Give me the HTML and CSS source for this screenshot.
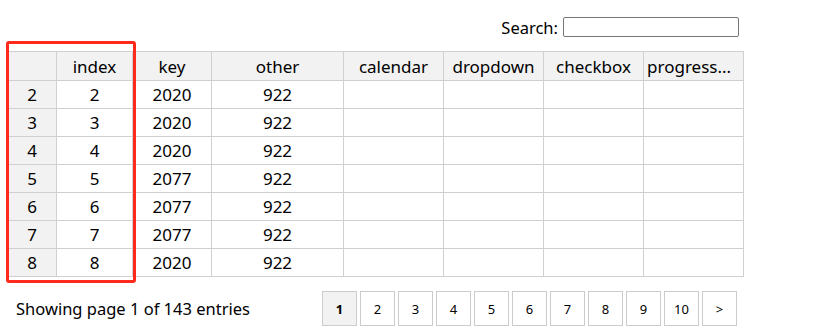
FILE: index.html
```html
<!DOCTYPE html>
<html>
<head>
  <title>Table</title>
  <link rel="stylesheet" href="styles.css">
</head>
<body>
  <div class="container">
    <div class="search-bar">
      <label for="search">Search:</label>
      <input type="text" id="search">
    </div>

    <div class="table-wrap">
      <table class="grid">
        <colgroup>
          <col style="width: 49px">
          <col style="width: 76px">
          <col style="width: 79px">
          <col style="width: 132px">
          <col style="width: 100px">
          <col style="width: 100px">
          <col style="width: 100px">
          <col style="width: 100px">
        </colgroup>
        <thead>
          <tr>
            <th class="row-head"></th>
            <th>index</th>
            <th>key</th>
            <th>other</th>
            <th>calendar</th>
            <th>dropdown</th>
            <th>checkbox</th>
            <th class="clip">progress...</th>
          </tr>
        </thead>
        <tbody>
          <tr><td class="row-head">2</td><td>2</td><td>2020</td><td>922</td><td></td><td></td><td></td><td></td></tr>
          <tr><td class="row-head">3</td><td>3</td><td>2020</td><td>922</td><td></td><td></td><td></td><td></td></tr>
          <tr><td class="row-head">4</td><td>4</td><td>2020</td><td>922</td><td></td><td></td><td></td><td></td></tr>
          <tr><td class="row-head">5</td><td>5</td><td>2077</td><td>922</td><td></td><td></td><td></td><td></td></tr>
          <tr><td class="row-head">6</td><td>6</td><td>2077</td><td>922</td><td></td><td></td><td></td><td></td></tr>
          <tr><td class="row-head">7</td><td>7</td><td>2077</td><td>922</td><td></td><td></td><td></td><td></td></tr>
          <tr><td class="row-head">8</td><td>8</td><td>2020</td><td>922</td><td></td><td></td><td></td><td></td></tr>
        </tbody>
      </table>
      <div class="highlight"></div>
    </div>

    <div class="footer">
      <span class="info">Showing page 1 of 143 entries</span>
      <div class="pager">
        <button class="active">1</button>
        <button>2</button>
        <button>3</button>
        <button>4</button>
        <button>5</button>
        <button>6</button>
        <button>7</button>
        <button>8</button>
        <button>9</button>
        <button>10</button>
        <button>&gt;</button>
      </div>
    </div>
  </div>
</body>
</html>
```

FILE: styles.css
```css
body {
  margin: 0;
  background: #fff;
  color: #000;
  font-family: "Noto Sans", "Open Sans", sans-serif;
}

.container {
  width: 737px;
  padding-left: 7px;
}

.search-bar {
  display: flex;
  justify-content: flex-end;
  align-items: center;
  height: 20px;
  padding-top: 17px;
  padding-right: 5px;
  font-size: 16.5px;
}

.search-bar label {
  margin-right: 5px;
}

.search-bar input {
  width: 176px;
  height: 20px;
  box-sizing: border-box;
  border: 1px solid #767676;
  border-radius: 2px;
  padding: 0 3px;
  font-size: 13px;
}

.table-wrap {
  position: relative;
  margin-top: 14px;
}

.grid {
  border-collapse: collapse;
  table-layout: fixed;
  width: 737px;
  font-size: 17px;
}

.grid th,
.grid td {
  border: 1px solid #d0d0d0;
  height: 27px;
  padding: 0 3px;
  text-align: center;
  white-space: nowrap;
  font-weight: normal;
  line-height: 27px;
}

.grid th {
  height: 28px;
  background: #f2f2f2;
}

.grid th.clip {
  text-align: left;
}

.grid .row-head {
  background: #f2f2f2;
}

.highlight {
  position: absolute;
  left: -1px;
  top: -10px;
  width: 124px;
  height: 236px;
  border: 3px solid #ff2a1c;
  border-radius: 3px;
}

.footer {
  display: flex;
  justify-content: space-between;
  align-items: center;
  margin-top: 14px;
  padding-left: 9px;
  padding-right: 7px;
}

.info {
  font-size: 16.5px;
}

.pager {
  display: flex;
  gap: 3px;
}

.pager button {
  width: 35px;
  height: 35px;
  padding: 0;
  border: 1px solid #cccccc;
  background: #fff;
  font-family: "Noto Sans", sans-serif;
  font-size: 13px;
  color: #000;
}

.pager button.active {
  background: #f2f2f2;
  font-weight: bold;
}
```
